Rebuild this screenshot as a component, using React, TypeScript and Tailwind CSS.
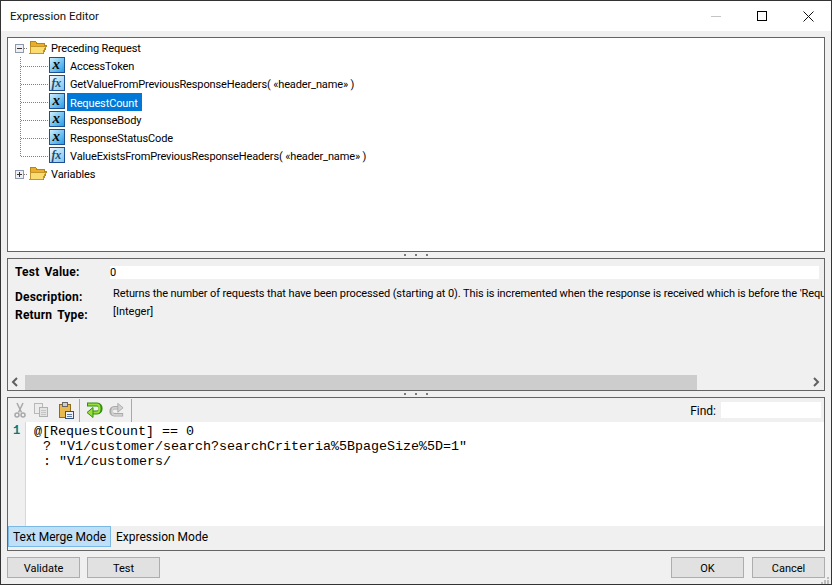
import React from "react";

const ui = { fontFamily: '"Roboto", "Liberation Sans", sans-serif' };

function Connector({ last }: { last?: boolean }) {
  return (
    <svg width="41" height="18" viewBox="0 0 41 18" className="shrink-0" shapeRendering="crispEdges">
      <g stroke="#808080" strokeDasharray="1 1" fill="none">
        <path d={last ? "M12.5 0V9.5" : "M12.5 0V18"} />
        <path d="M13 9.5H41" />
      </g>
    </svg>
  );
}

function Folder() {
  return (
    <svg width="20" height="16" viewBox="0 0 20 16" className="shrink-0 mb-[3px]" shapeRendering="crispEdges">
      <path d="M2 3.5V14.5H15.5L18.5 6.5H16V4.5H9L7.5 2.5H3Z" fill="#e8ae2c" stroke="#b5861c" />
      <path d="M3 7.5H17.5L15 14H2Z" fill="#fbdc72" stroke="#c4962a" />
    </svg>
  );
}

function Expander({ open }: { open: boolean }) {
  return (
    <svg width="9" height="9" viewBox="0 0 9 9" className="shrink-0" shapeRendering="crispEdges">
      <rect x="0.5" y="0.5" width="8" height="8" fill="#eef0f3" stroke="#8c99ae" />
      <path d="M2 4.5H7" stroke="#333" />
      {!open && <path d="M4.5 2V7" stroke="#333" />}
    </svg>
  );
}

function ItemIcon({ fx }: { fx?: boolean }) {
  return (
    <svg width="16" height="16" viewBox="0 0 16 16" className="shrink-0 mb-[2px]">
      <defs>
        <linearGradient id={fx ? "gfx" : "gx"} x1="0" y1="0" x2="1" y2="1">
          <stop offset="0" stopColor={fx ? "#f4fbff" : "#d4f1ff"} />
          <stop offset="1" stopColor={fx ? "#7cc3ec" : "#1f9be6"} />
        </linearGradient>
      </defs>
      <rect x="0.5" y="0.5" width="15" height="15" fill={`url(#${fx ? "gfx" : "gx"})`} stroke="#1d4f93" />
      <text
        x={fx ? 2.5 : 3.5}
        y="12"
        fontFamily='"Liberation Serif", serif'
        fontStyle="italic"
        fontWeight="bold"
        fontSize={fx ? 12 : 15}
        fill={fx ? "#234a72" : "#0a0a0a"}
      >
        {fx ? "fx" : "x"}
      </text>
    </svg>
  );
}

const items: { label: string; fx?: boolean; selected?: boolean }[] = [
  { label: "AccessToken" },
  { label: "GetValueFromPreviousResponseHeaders( «header_name» )", fx: true },
  { label: "RequestCount", selected: true },
  { label: "ResponseBody" },
  { label: "ResponseStatusCode" },
  { label: "ValueExistsFromPreviousResponseHeaders( «header_name» )", fx: true },
];

function Grip() {
  return (
    <div className="h-[6px] flex items-center justify-center gap-[9px]">
      <span className="w-[2px] h-[2px] bg-[#777]" />
      <span className="w-[2px] h-[2px] bg-[#777]" />
      <span className="w-[2px] h-[2px] bg-[#777]" />
    </div>
  );
}

function Btn({ label }: { label: string }) {
  return (
    <button className="w-[73px] h-[21px] pt-[2px] border border-[#adadad] bg-[#e1e1e1] text-[11px] leading-[16px] text-black">
      {label}
    </button>
  );
}

function Cut() {
  return (
    <svg width="12" height="17" viewBox="0 0 12 17" fill="none" stroke="#a8a8a8" strokeWidth="1.5">
      <path d="M3 1L7.5 10.5M9 1L4.5 10.5" />
      <circle cx="3" cy="13" r="2" />
      <circle cx="9" cy="13" r="2" />
    </svg>
  );
}
function Copy() {
  return (
    <svg width="16" height="16" viewBox="0 0 16 16" shapeRendering="crispEdges">
      <rect x="1.5" y="1.5" width="8" height="10" fill="#ececec" stroke="#b8b8b8" />
      <rect x="6.5" y="5.5" width="8" height="9" fill="#e4e4e4" stroke="#b0b0b0" />
      <path d="M8 8H13M8 10H13M8 12H13" stroke="#c4c4c4" />
    </svg>
  );
}
function Paste() {
  return (
    <svg width="17" height="17" viewBox="0 0 17 17" shapeRendering="crispEdges">
      <rect x="1.5" y="2.5" width="11" height="13" fill="#e8b94f" stroke="#8f6a22" />
      <rect x="4.5" y="0.5" width="5" height="4" fill="#cfcfcf" stroke="#666" />
      <rect x="7.5" y="9.5" width="8" height="7" fill="#eef2f8" stroke="#33527f" />
      <path d="M9 12H14M9 14H14" stroke="#5d7ba6" />
    </svg>
  );
}
function Arrow({ redo }: { redo?: boolean }) {
  const dark = redo ? "#a9a9a9" : "#2f8f12";
  const light = redo ? "#d2d2d2" : "#9ade3c";
  return (
    <svg width="17" height="16" viewBox="0 0 17 16" fill="none">
      <g transform={redo ? "rotate(180 8.5 8)" : undefined}>
        <path d="M1 2.5H11C15.8 2.5 15.8 10.5 11 10.5H5" stroke={dark} strokeWidth="4" />
        <path d="M2 2.5H11C14.4 2.5 14.4 10.5 11 10.5H6" stroke={light} strokeWidth="2" />
        <path d="M7 5.5L1 10.5L7 15.5Z" fill={light} stroke={dark} />
      </g>
    </svg>
  );
}

export default function App() {
  return (
    <div
      className="relative w-[832px] h-[585px] bg-[#f0f0f0] border border-[#333] flex flex-col overflow-hidden text-[12px] text-black"
      style={ui}
    >
      {/* title bar */}
      <div className="h-[30px] bg-white flex items-center shrink-0">
        <span className="ml-[9px] pt-px text-[11.5px] text-[#111] flex-1">Expression Editor</span>
        <div className="w-[46px] flex justify-center">
          <span className="w-[10px] h-px bg-[#c4c4c4]" />
        </div>
        <div className="w-[46px] flex justify-center">
          <span className="w-[10px] h-[10px] border border-black" />
        </div>
        <div className="w-[46px] flex justify-center">
          <svg width="11" height="11" viewBox="0 0 11 11" stroke="#111" fill="none">
            <path d="M0.5 0.5L10.5 10.5M10.5 0.5L0.5 10.5" />
          </svg>
        </div>
      </div>

      <div className="flex-1 flex flex-col px-[6px] pt-[6px] min-h-0">
        {/* tree */}
        <div className="h-[215px] shrink-0 border border-[#646464] bg-white pt-px overflow-hidden text-[11px] tracking-[-0.13px]">
          <div className="flex items-center h-[18px] pl-[7px]">
            <Expander open />
            <svg width="4" height="18" className="shrink-0" shapeRendering="crispEdges">
              <path d="M0 9.5H4" stroke="#808080" strokeDasharray="1 1" />
            </svg>
            <Folder />
            <span className="ml-[3px] pt-[2px]">Preceding Request</span>
          </div>
          {items.map((it, i) => (
            <div key={it.label} className="flex items-center h-[18px]">
              <Connector last={i === items.length - 1} />
              <ItemIcon fx={it.fx} />
              {it.selected ? (
                <span className="ml-[2px] h-[18px] pl-[3px] pr-[4px] leading-[21px] bg-[#0078d7] text-white">{it.label}</span>
              ) : (
                <span className="ml-[2px] px-[3px] pt-[2px] whitespace-nowrap">{it.label}</span>
              )}
            </div>
          ))}
          <div className="flex items-center h-[18px] pl-[7px]">
            <Expander open={false} />
            <svg width="4" height="18" className="shrink-0" shapeRendering="crispEdges">
              <path d="M0 9.5H4" stroke="#808080" strokeDasharray="1 1" />
            </svg>
            <Folder />
            <span className="ml-[3px] pt-[2px]">Variables</span>
          </div>
        </div>

        <Grip />

        {/* details */}
        <div className="h-[133px] shrink-0 border border-[#646464] flex flex-col overflow-hidden">
          <div className="flex items-center h-[14px] mt-[6px] pl-[7px] pr-[5px] shrink-0">
            <span className="w-[95px] font-bold text-[12px] leading-[14px] [word-spacing:2px] tracking-[0.2px]">Test Value:</span>
            <div className="flex-1 h-[13px] bg-white text-[11px] leading-[13px]">0</div>
          </div>
          <div className="flex-1 min-h-0 grid grid-cols-[98px_1fr] grid-rows-[18px_18px] pl-[7px] pt-[7px] overflow-hidden">
            <span className="font-bold mt-[4px] leading-[14px] tracking-[0.2px]">Description:</span>
            <span className="whitespace-nowrap text-[11px] leading-[15px] tracking-[-0.1px]">
              Returns the number of requests that have been processed (starting at 0). This is incremented when the response is received which is before the 'Request
            </span>
            <span className="font-bold mt-[4px] leading-[14px] tracking-[0.2px] [word-spacing:2px]">Return Type:</span>
            <span className="text-[11px] leading-[15px]">[Integer]</span>
          </div>
          <div className="h-[16px] shrink-0 flex items-center">
            <svg width="17" height="16" viewBox="0 0 17 16" className="shrink-0" fill="none" stroke="#606060" strokeWidth="2">
              <path d="M9 4L5 8L9 12" />
            </svg>
            <div className="w-[672px] h-[15px] bg-[#cdcdcd]" />
            <div className="flex-1" />
            <svg width="17" height="16" viewBox="0 0 17 16" className="shrink-0" fill="none" stroke="#606060" strokeWidth="2">
              <path d="M7 4L11 8L7 12" />
            </svg>
          </div>
        </div>

        <Grip />

        {/* editor */}
        <div className="h-[154px] shrink-0 border border-[#646464] flex flex-col overflow-hidden">
          <div className="h-[24px] shrink-0 flex items-center">
            <div className="w-[20px] flex justify-center pl-[3px]"><Cut /></div>
            <div className="w-[26px] flex justify-center"><Copy /></div>
            <div className="w-[25px] flex justify-center"><Paste /></div>
            <span className="w-px h-[23px] bg-[#a9a9a9]" />
            <div className="w-[29px] flex justify-center"><Arrow /></div>
            <div className="w-[22px] flex justify-center pr-[7px]"><Arrow redo /></div>
            <span className="w-px h-[23px] bg-[#a9a9a9]" />
            <div className="flex-1" />
            <span className="mr-[5px] pt-px">Find:</span>
            <div className="w-[100px] h-[16px] bg-white mr-[3px]" />
          </div>
          <div className="flex-1 min-h-0 flex bg-white">
            <div className="w-[18px] bg-[#f0f0f0] border-r border-[#d8d8d8] shrink-0 pt-[2px] text-center text-[#007c7c] font-bold leading-[15px]" style={{ fontFamily: '"Liberation Mono", monospace', fontSize: 12 }}>
              1
            </div>
            <div
              className="pl-[8px] pt-[2px] text-[13.33px] leading-[15px] text-black whitespace-pre"
              style={{ fontFamily: '"Liberation Mono", monospace' }}
            >
              <div>{`@[RequestCount] == 0`}</div>
              <div className="ml-px">{` ? "V1/customer/search?searchCriteria%5BpageSize%5D=1"`}</div>
              <div className="ml-px">{` : "V1/customers/`}</div>
            </div>
          </div>
          <div className="h-[24px] shrink-0 flex items-start">
            <div className="w-[103px] h-[21px] bg-[#bfdff7] border border-[#7cb8e6] text-center leading-[21px]">Text Merge Mode</div>
            <span className="ml-[5px] leading-[23px]">Expression Mode</span>
          </div>
        </div>

        {/* buttons */}
        <div className="mt-[6px] flex items-start gap-[7px]">
          <Btn label="Validate" />
          <Btn label="Test" />
          <div className="flex-1" />
          <Btn label="OK" />
          <div className="ml-px"><Btn label="Cancel" /></div>
        </div>
      </div>

      {/* size grip */}
      <svg width="9" height="7" viewBox="0 0 9 7" className="absolute right-px bottom-0" fill="#bdbdbd" shapeRendering="crispEdges">
        <rect x="6" y="0" width="2" height="2" />
        <rect x="3" y="3" width="2" height="2" />
        <rect x="6" y="3" width="2" height="2" />
        <rect x="0" y="5" width="2" height="2" />
        <rect x="3" y="5" width="2" height="2" />
        <rect x="6" y="5" width="2" height="2" />
      </svg>
    </div>
  );
}
